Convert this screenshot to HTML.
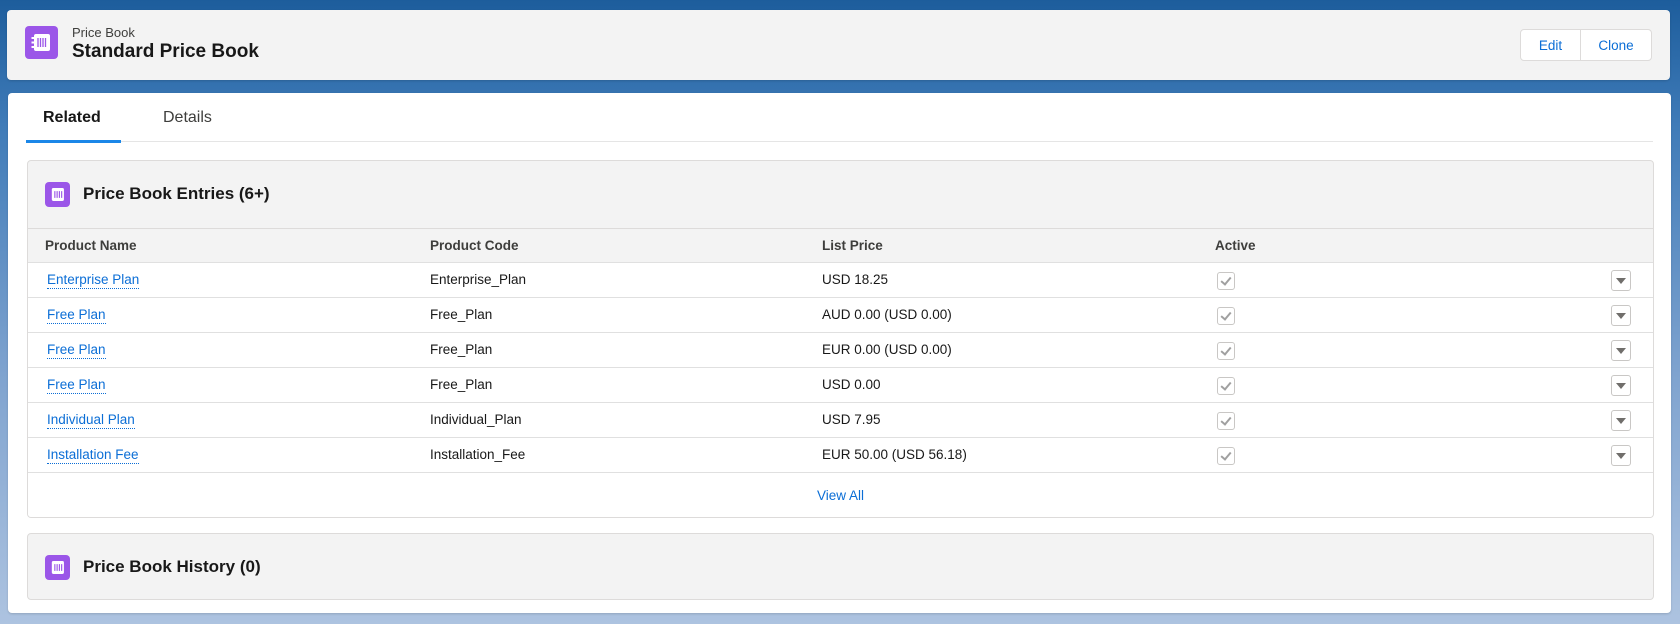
<!DOCTYPE html>
<html><head><meta charset="utf-8"><style>
*{box-sizing:border-box;margin:0;padding:0}
body{width:1680px;height:624px;overflow:hidden;font-family:"Liberation Sans",sans-serif;background:linear-gradient(180deg,#1d5d9c 0%,#3f7bb8 20%,#7fa3cf 60%,#adc3e0 100%);position:relative;color:#181818}
.abs{position:absolute}
.hdr{left:7px;top:10px;width:1663px;height:70px;background:#f3f3f3;border-radius:4px;box-shadow:0 1px 2px rgba(0,0,0,.15)}
.icon{background:#9b56e8;border-radius:4px}
.btn{top:19px;height:32px;border:1px solid #dddbda;background:#fff;color:#0b6ed6;font-size:13.5px;display:flex;align-items:center;justify-content:center}
.card{left:8px;top:93px;width:1663px;height:520px;background:#fff;border-radius:4px;box-shadow:0 1px 2px rgba(0,0,0,.15)}
.rel{border:1px solid #dddbda;border-radius:4px;background:#f3f3f3;overflow:hidden}
.row{left:0;width:100%;height:35px;border-top:1px solid #e0e0e0;background:#fff;font-size:13.5px}
.row span{position:absolute;top:9px}
.lnk{color:#0b6ed6;border-bottom:1px dotted #0b6ed6;padding-bottom:1px}
.cb{position:absolute;left:1189px;top:9px;width:18px;height:18px;border:1px solid #c9c7c5;border-radius:3px;background:#fff}
.dd{position:absolute;left:1583px;top:7px;width:20px;height:21px;border:1px solid #c9c7c5;border-radius:3px;background:#fff}
.th{font-size:13.5px;font-weight:bold;color:#3e3e3c;position:absolute;top:9px}
</style></head><body>
<div class="abs hdr">
  <div class="abs icon" style="left:18px;top:16px;width:33px;height:33px">
    <svg width="33" height="33" viewBox="0 0 33 33"><rect x="9" y="8" width="16" height="17" rx="2" fill="#fff"/><g stroke="#9b56e8" stroke-width="1.3"><line x1="13" y1="12" x2="13" y2="21"/><line x1="15.5" y1="12" x2="15.5" y2="21"/><line x1="18" y1="12" x2="18" y2="21"/><line x1="20.5" y1="12" x2="20.5" y2="21"/></g><g fill="#fff"><rect x="6.5" y="11" width="3" height="2"/><rect x="6.5" y="15.5" width="3" height="2"/><rect x="6.5" y="20" width="3" height="2"/></g></svg>
  </div>
  <div class="abs" style="left:65px;top:15px;font-size:13px;color:#3e3e3c">Price Book</div>
  <div class="abs" style="left:65px;top:31px;font-size:19px;font-weight:bold">Standard Price Book</div>
  <div class="abs btn" style="left:1513px;width:61px;border-radius:4px 0 0 4px">Edit</div>
  <div class="abs btn" style="left:1573px;width:72px;border-radius:0 4px 4px 0">Clone</div>
</div>
<div class="abs card">
  <div class="abs" style="left:35px;top:16px;font-size:16px;font-weight:bold">Related</div>
  <div class="abs" style="left:155px;top:16px;font-size:16px;color:#3e3e3c">Details</div>
  <div class="abs" style="left:18px;top:48px;width:1627px;height:1px;background:#e5e5e5"></div>
  <div class="abs" style="left:18px;top:47px;width:95px;height:3px;background:#1b87e8"></div>

  <div class="abs rel" style="left:19px;top:67px;width:1627px;height:358px">
    <div class="abs icon" style="left:17px;top:21px;width:25px;height:25px">
      <svg width="25" height="25" viewBox="0 0 33 33"><rect x="9" y="8" width="16" height="17" rx="2" fill="#fff"/><g stroke="#9b56e8" stroke-width="1.5"><line x1="13" y1="12" x2="13" y2="21"/><line x1="16" y1="12" x2="16" y2="21"/><line x1="19" y1="12" x2="19" y2="21"/><line x1="22" y1="12" x2="22" y2="21"/></g></svg>
    </div>
    <div class="abs" style="left:55px;top:23px;font-size:17px;font-weight:bold">Price Book Entries (6+)</div>
    <div class="abs" style="left:0;top:67px;width:100%;height:34px;border-top:1px solid #dddbda">
      <span class="th" style="left:17px">Product Name</span>
      <span class="th" style="left:402px">Product Code</span>
      <span class="th" style="left:794px">List Price</span>
      <span class="th" style="left:1187px">Active</span>
    </div>
    <div class="abs row" style="top:101px"><span style="left:19px" class="lnk">Enterprise Plan</span><span style="left:402px">Enterprise_Plan</span><span style="left:794px">USD 18.25</span><i class="cb"></i><i class="dd"></i></div>
    <div class="abs row" style="top:136px"><span style="left:19px" class="lnk">Free Plan</span><span style="left:402px">Free_Plan</span><span style="left:794px">AUD 0.00 (USD 0.00)</span><i class="cb"></i><i class="dd"></i></div>
    <div class="abs row" style="top:171px"><span style="left:19px" class="lnk">Free Plan</span><span style="left:402px">Free_Plan</span><span style="left:794px">EUR 0.00 (USD 0.00)</span><i class="cb"></i><i class="dd"></i></div>
    <div class="abs row" style="top:206px"><span style="left:19px" class="lnk">Free Plan</span><span style="left:402px">Free_Plan</span><span style="left:794px">USD 0.00</span><i class="cb"></i><i class="dd"></i></div>
    <div class="abs row" style="top:241px"><span style="left:19px" class="lnk">Individual Plan</span><span style="left:402px">Individual_Plan</span><span style="left:794px">USD 7.95</span><i class="cb"></i><i class="dd"></i></div>
    <div class="abs row" style="top:276px"><span style="left:19px" class="lnk">Installation Fee</span><span style="left:402px">Installation_Fee</span><span style="left:794px">EUR 50.00 (USD 56.18)</span><i class="cb"></i><i class="dd"></i></div>
    <div class="abs row" style="top:311px;height:47px"><span style="left:789px;top:15px;color:#0b6ed6">View All</span></div>
  </div>

  <div class="abs rel" style="left:19px;top:440px;width:1627px;height:67px">
    <div class="abs icon" style="left:17px;top:21px;width:25px;height:25px">
      <svg width="25" height="25" viewBox="0 0 33 33"><rect x="9" y="8" width="16" height="17" rx="2" fill="#fff"/><g stroke="#9b56e8" stroke-width="1.5"><line x1="13" y1="12" x2="13" y2="21"/><line x1="16" y1="12" x2="16" y2="21"/><line x1="19" y1="12" x2="19" y2="21"/><line x1="22" y1="12" x2="22" y2="21"/></g></svg>
    </div>
    <div class="abs" style="left:55px;top:23px;font-size:17px;font-weight:bold">Price Book History (0)</div>
  </div>
</div>
<style>
.cb::after{content:"";position:absolute;left:5px;top:2px;width:4px;height:8px;border:solid #a0a0a0;border-width:0 2px 2px 0;transform:rotate(40deg)}
.dd::after{content:"";position:absolute;left:4px;top:7px;border-left:5px solid transparent;border-right:5px solid transparent;border-top:6px solid #706e6b}
</style>
</body></html>
